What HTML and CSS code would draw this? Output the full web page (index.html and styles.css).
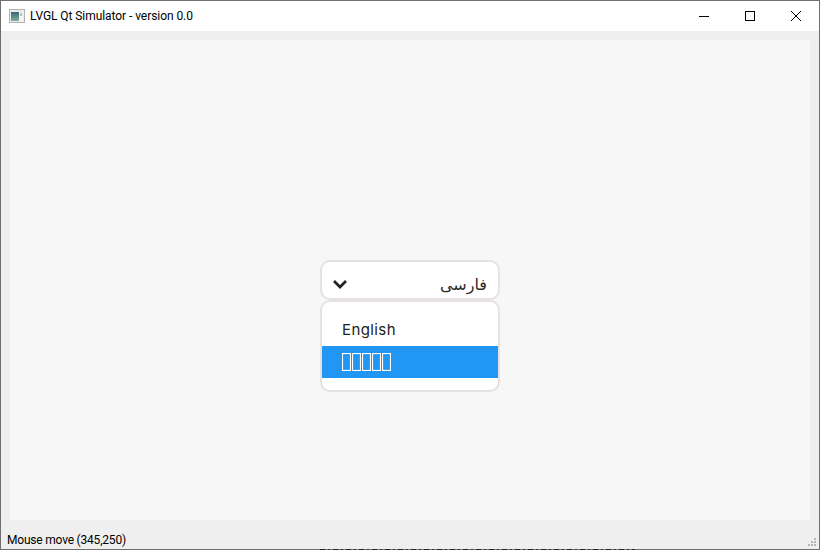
FILE: index.html
```html
<!DOCTYPE html>
<html lang="en">
<head>
    <meta charset="UTF-8">
    <title>LVGL Qt Simulator - version 0.0</title>
    <link rel="stylesheet" href="styles.css">
</head>
<body>
    <div class="window">
        <!-- Title bar -->
        <div class="titlebar">
            <svg class="app-icon" width="16" height="16" viewBox="0 0 16 16">
                <defs>
                    <linearGradient id="pane" x1="0" y1="0" x2="0" y2="1">
                        <stop offset="0" stop-color="#3c6474"/>
                        <stop offset="1" stop-color="#7fb0a0"/>
                    </linearGradient>
                </defs>
                <rect x="0.5" y="1.5" width="15" height="13" fill="#ececec" stroke="#b4b4b4"/>
                <rect x="2" y="4" width="8" height="9" fill="url(#pane)"/>
                <rect x="10" y="4" width="4" height="9" fill="#f6f6f6"/>
                <rect x="11" y="5" width="2" height="3" fill="#a8c4b4"/>
            </svg>
            <span class="title">LVGL Qt Simulator - version 0.0</span>
            <div class="controls">
                <svg width="46" height="30" viewBox="0 0 46 30"><path d="M18 15.500h10" stroke="#000" fill="none"/></svg>
                <svg width="46" height="30" viewBox="0 0 46 30"><rect x="18.500" y="10.500" width="9" height="9" stroke="#000" fill="none"/></svg>
                <svg width="46" height="30" viewBox="0 0 46 30"><path d="M18 10l10 10M28 10l-10 10" stroke="#000" fill="none"/></svg>
            </div>
        </div>

        <div class="central">
            <div class="canvas">
                <div class="dropdown">
                    <div class="dropdown-button">
                        <svg class="chevron" width="16" height="10" viewBox="0 0 16 10"><path d="M2 2l6 6 6-6" stroke="#222" stroke-width="2.800" fill="none"/></svg>
                        <span class="selected" dir="rtl">فارسی</span>
                    </div>
                    <div class="dropdown-list">
                        <div class="option">English</div>
                        <div class="option active">
                            <i class="tofu"></i><i class="tofu"></i><i class="tofu"></i><i class="tofu"></i><i class="tofu"></i>
                        </div>
                    </div>
                </div>
            </div>
        </div>

        <div class="statusbar">
            <span class="status-text">Mouse move (345,250)</span>
            <svg class="grip" width="10" height="10" viewBox="0 0 10 10" fill="#b5b5b5">
                <rect x="7" y="0" width="2" height="2"/>
                <rect x="4" y="3" width="2" height="2"/><rect x="7" y="3" width="2" height="2"/>
                <rect x="1" y="6" width="2" height="2"/><rect x="4" y="6" width="2" height="2"/><rect x="7" y="6" width="2" height="2"/>
            </svg>
        </div>
    </div>
</body>
</html>
```

FILE: styles.css
```css
html, body {
    margin: 0;
    padding: 0;
}

body {
    width: 820px;
    height: 550px;
    overflow: hidden;
    font-family: 'Roboto', sans-serif;
    background: #efefef;
}

.window {
    box-sizing: border-box;
    position: relative;
    width: 820px;
    height: 550px;
    border: 1px solid #6f6f6f;
    display: flex;
    flex-direction: column;
}

/* dark specks of whatever sits behind the window, on its bottom edge */
.window::after {
    content: "";
    position: absolute;
    left: 319px;
    bottom: -1px;
    width: 315px;
    height: 1px;
    background: repeating-linear-gradient(90deg, #222 0 5px, #6f6f6f 5px 8px, #333 8px 10px, #777 10px 13px);
}

.titlebar {
    height: 30px;
    background: #fff;
    display: flex;
    align-items: center;
    padding-left: 8px;
    flex-shrink: 0;
}

.app-icon {
    margin-right: 5px;
}

.title {
    font-size: 12px;
    letter-spacing: -0.06px;
    color: #000;
}

.controls {
    margin-left: auto;
    display: flex;
}

.central {
    flex: 1;
    padding: 9px;
    background: #efefef;
    display: flex;
}

.canvas {
    flex: 1;
    background: #f7f7f7;
    display: flex;
    justify-content: center;
    align-items: center;
}

.dropdown {
    position: relative;
    width: 180px;
}

.dropdown-button {
    box-sizing: border-box;
    height: 40px;
    background: #fff;
    border: 2px solid #e6e2e3;
    border-radius: 10px;
    display: flex;
    align-items: center;
    justify-content: space-between;
    padding: 8px 11px 0 10px;
}

.selected {
    font-family: 'DejaVu Sans', sans-serif;
    font-size: 16px;
    color: #2a2a2a;
}

.dropdown-list {
    box-sizing: border-box;
    position: absolute;
    top: 40px;
    left: 0;
    width: 180px;
    height: 92px;
    background: #fff;
    border: 2px solid #e6e2e3;
    border-radius: 10px;
    padding-top: 11px;
    overflow: hidden;
}

.option {
    height: 33px;
    padding-left: 20px;
    display: flex;
    align-items: center;
    font-family: 'Inter', sans-serif;
    font-size: 15px;
    letter-spacing: 0.4px;
    color: #212121;
}

.option.active {
    background: #2196f3;
    height: 32px;
}

.tofu {
    box-sizing: border-box;
    width: 9px;
    height: 18px;
    margin-right: 1px;
    border: 1px solid #fff;
    box-shadow: inset 0 0 1px #fff;
}

.statusbar {
    height: 20px;
    background: #efefef;
    display: flex;
    align-items: center;
    justify-content: space-between;
    padding: 0 2px 0 6px;
    font-size: 12px;
    color: #000;
    flex-shrink: 0;
}

.status-text {
    letter-spacing: -0.2px;
    padding-top: 2px;
}

.grip {
    align-self: flex-end;
    margin-bottom: 1px;
}
```
